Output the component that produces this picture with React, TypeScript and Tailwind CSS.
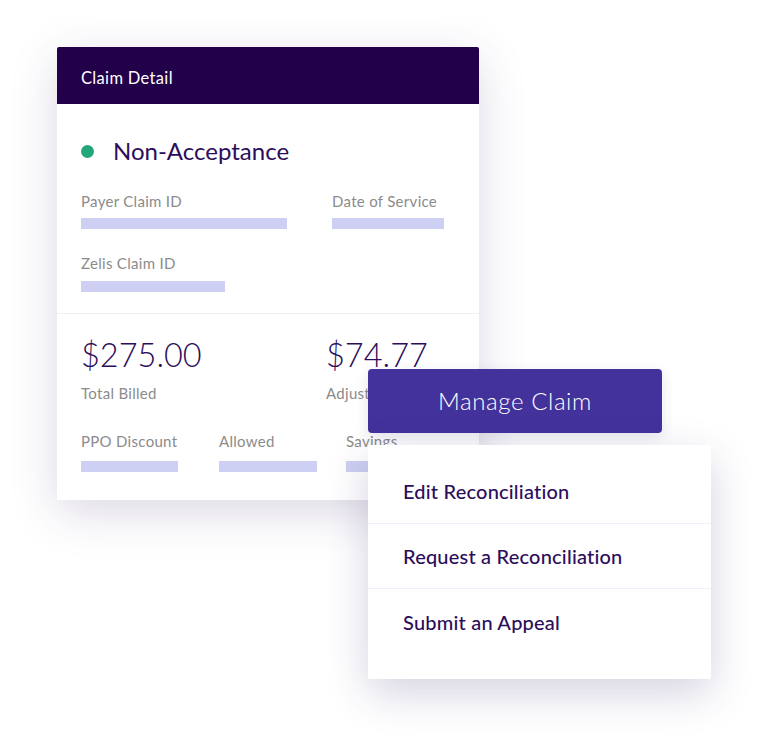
const FONT = { fontFamily: 'Lato, "Noto Sans", "Liberation Sans", sans-serif' };

function Bar({ w }: { w: string }) {
  return <div className={`h-[11px] bg-[#cdd0f2] ${w}`} />;
}

function Field({ label, bar, top = 'mt-[7px]' }: { label: string; bar: string; top?: string }) {
  return (
    <div>
      <div className="text-[15px] leading-5 tracking-[0.02em] text-[#8b8b8b]">{label}</div>
      <div className={top}>
        <Bar w={bar} />
      </div>
    </div>
  );
}

const ACTIONS = ['Edit Reconciliation', 'Request a Reconciliation', 'Submit an Appeal'];

export default function App() {
  return (
    <div className="relative h-[746px] w-[768px] overflow-hidden bg-white" style={FONT}>
      <div className="pl-[57px] pt-[47px]">
        <div className="w-[422px] bg-white shadow-[0_12px_44px_rgba(45,25,95,0.17)]">
          <div className="flex h-[57px] items-center rounded-t-[2px] bg-[#22004a] px-6 pt-[5px] text-[16.5px] tracking-[0.02em] text-white">
            Claim Detail
          </div>

          <div className="px-6 pb-[21px] pt-8">
            <div className="flex h-[30px] items-center">
              <span className="h-[13px] w-[13px] rounded-full bg-[#23a67b]" />
              <span className="ml-[19px] text-[24px] leading-[30px] text-[#2c0d5c]">Non-Acceptance</span>
            </div>
            <div className="mt-[25px] grid grid-cols-[251px_1fr]">
              <Field label="Payer Claim ID" bar="w-[206px]" />
              <Field label="Date of Service" bar="w-[112px]" />
            </div>
            <div className="mt-[24px]">
              <Field label="Zelis Claim ID" bar="w-[144px]" top="mt-[8px]" />
            </div>
          </div>

          <div className="h-px bg-[#efeff8]" />

          <div className="px-6 pb-[28px] pt-[21px]">
            <div className="grid grid-cols-[245px_1fr]">
              <div>
                <div className="text-[32.5px] leading-[40px] font-light text-[#2c0d5c]">$275.00</div>
                <div className="mt-2 text-[15px] leading-5 tracking-[0.02em] text-[#8b8b8b]">Total Billed</div>
              </div>
              <div>
                <div className="text-[32.5px] leading-[40px] font-light text-[#2c0d5c]">$74.77</div>
                <div className="mt-2 text-[15px] leading-5 tracking-[0.02em] text-[#8b8b8b]">Adjustment</div>
              </div>
            </div>
            <div className="mt-[28px] grid grid-cols-[138px_127px_1fr]">
              <Field label="PPO Discount" bar="w-[97px]" top="mt-[10px]" />
              <Field label="Allowed" bar="w-[98px]" top="mt-[10px]" />
              <Field label="Savings" bar="w-[98px]" top="mt-[10px]" />
            </div>
          </div>
        </div>
      </div>

      {/* action menu lying over the card */}
      <div className="absolute left-[368px] top-[369px] w-[343px]">
        <button
          type="button"
          className="flex h-[64px] w-[294px] items-center justify-center rounded-[4px] bg-[#43329c] text-[24px] font-light tracking-[0.025em] text-white shadow-[0_4px_14px_rgba(45,25,95,0.12)]"
        >
          Manage Claim
        </button>
        <div className="mt-3 rounded-[2px] bg-white pb-[25px] pt-[14px] shadow-[0_14px_44px_rgba(45,25,95,0.2)]">
          {ACTIONS.map((a, i) => (
            <div
              key={a}
              className={`flex h-[65px] items-center px-[35px] text-[20px] font-medium tracking-[0.01em] text-[#2c0d5c] ${
                i < ACTIONS.length - 1 ? 'border-b border-[#efeefa]' : ''
              }`}
            >
              {a}
            </div>
          ))}
        </div>
      </div>
    </div>
  );
}
